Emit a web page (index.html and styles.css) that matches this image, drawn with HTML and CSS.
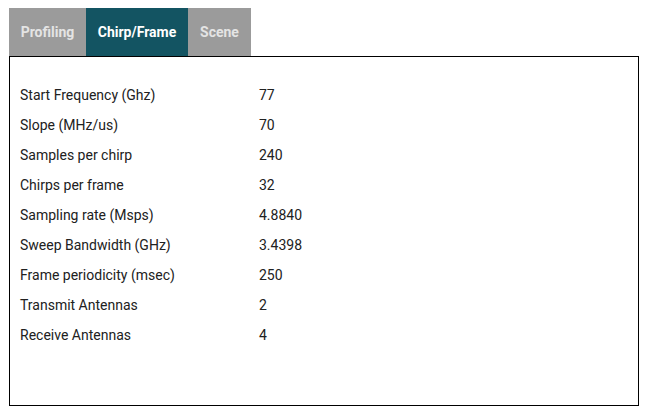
FILE: index.html
```html
<!DOCTYPE html>
<html>
<head>
<meta charset="utf-8">
<link rel="stylesheet" href="styles.css">
</head>
<body>
<div class="page">
  <div class="tabs">
    <div class="tab tab-profiling">Profiling</div>
    <div class="tab tab-chirp active">Chirp/Frame</div>
    <div class="tab tab-scene">Scene</div>
  </div>
  <div class="panel">
    <div class="rows">
      <div class="row"><span class="label">Start Frequency (Ghz)</span><span class="value">77</span></div>
      <div class="row"><span class="label">Slope (MHz/us)</span><span class="value">70</span></div>
      <div class="row"><span class="label">Samples per chirp</span><span class="value">240</span></div>
      <div class="row"><span class="label">Chirps per frame</span><span class="value">32</span></div>
      <div class="row"><span class="label">Sampling rate (Msps)</span><span class="value">4.8840</span></div>
      <div class="row"><span class="label">Sweep Bandwidth (GHz)</span><span class="value">3.4398</span></div>
      <div class="row"><span class="label">Frame periodicity (msec)</span><span class="value">250</span></div>
      <div class="row"><span class="label">Transmit Antennas</span><span class="value">2</span></div>
      <div class="row"><span class="label">Receive Antennas</span><span class="value">4</span></div>
    </div>
  </div>
</div>
</body>
</html>
```
FILE: styles.css
```css
html, body {
  margin: 0;
  padding: 0;
  background: #ffffff;
}
body {
  font-family: Roboto, "Liberation Sans", sans-serif;
  color: #212121;
}
.page {
  padding: 8px 9px;
}
.tabs {
  display: flex;
  height: 48px;
}
.tab {
  display: flex;
  align-items: center;
  justify-content: center;
  background: #9b9b9b;
  color: #e4e4e4;
  font-weight: 700;
  font-size: 14px;
}
.tab-profiling { width: 77px; }
.tab-chirp { width: 102px; }
.tab-scene { width: 63px; }
.tab.active {
  background: #135462;
  color: #ffffff;
}
.panel {
  box-sizing: border-box;
  width: 630px;
  height: 350px;
  border: 1px solid #000000;
  padding: 23px 10px 0 10px;
}
.rows {
  display: flex;
  flex-direction: column;
}
.row {
  display: grid;
  grid-template-columns: 239px auto;
  height: 30px;
  align-items: center;
  font-size: 14px;
}
```
